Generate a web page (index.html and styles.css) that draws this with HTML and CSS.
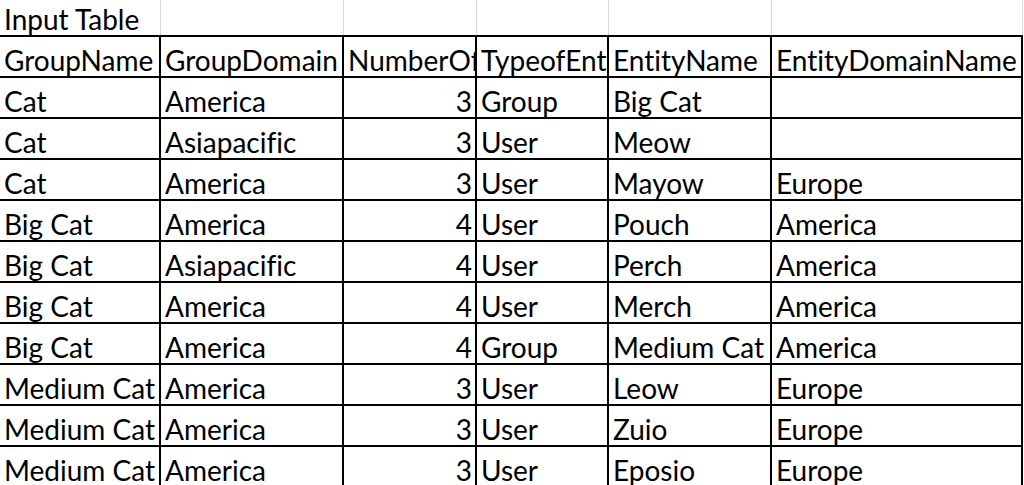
FILE: index.html
```html
<!DOCTYPE html>
<html>
<head>
<meta charset="utf-8">
<link rel="stylesheet" href="styles.css">
</head>
<body>
<table class="sheet">
  <colgroup>
    <col class="c1"><col class="c2"><col class="c3"><col class="c4"><col class="c5"><col class="c6">
  </colgroup>
  <tr class="title-row">
    <td>Input Table</td><td></td><td></td><td></td><td></td><td></td>
  </tr>
  <tr class="head-row">
    <td>GroupName</td><td>GroupDomain</td><td>NumberOf</td><td>TypeofEnt</td><td>EntityName</td><td>EntityDomainName</td>
  </tr>
  <tr><td>Cat</td><td>America</td><td class="num">3</td><td>Group</td><td>Big Cat</td><td></td></tr>
  <tr><td>Cat</td><td>Asiapacific</td><td class="num">3</td><td>User</td><td>Meow</td><td></td></tr>
  <tr><td>Cat</td><td>America</td><td class="num">3</td><td>User</td><td>Mayow</td><td>Europe</td></tr>
  <tr><td>Big Cat</td><td>America</td><td class="num">4</td><td>User</td><td>Pouch</td><td>America</td></tr>
  <tr><td>Big Cat</td><td>Asiapacific</td><td class="num">4</td><td>User</td><td>Perch</td><td>America</td></tr>
  <tr><td>Big Cat</td><td>America</td><td class="num">4</td><td>User</td><td>Merch</td><td>America</td></tr>
  <tr><td>Big Cat</td><td>America</td><td class="num">4</td><td>Group</td><td>Medium Cat</td><td>America</td></tr>
  <tr><td>Medium Cat</td><td>America</td><td class="num">3</td><td>User</td><td>Leow</td><td>Europe</td></tr>
  <tr><td>Medium Cat</td><td>America</td><td class="num">3</td><td>User</td><td>Zuio</td><td>Europe</td></tr>
  <tr><td>Medium Cat</td><td>America</td><td class="num">3</td><td>User</td><td>Eposio</td><td>Europe</td></tr>
</table>
</body>
</html>
```

FILE: styles.css
```css
html, body {
  margin: 0;
  padding: 0;
  background: #ffffff;
  overflow: hidden;
}

.sheet {
  border-collapse: collapse;
  table-layout: fixed;
  width: 1022px;
  font-family: Lato, "Liberation Sans", sans-serif;
  font-size: 28px;
  font-variant-ligatures: none;
  color: #000000;
}

.c1 { width: 160px; }
.c2 { width: 183px; }
.c3 { width: 133px; }
.c4 { width: 132px; }
.c5 { width: 163px; }
.c6 { width: 251px; }

.sheet td {
  height: 38px;
  padding: 0 3px 1px 4px;
  border: 2px solid #000000;
  border-left: none;
  white-space: nowrap;
  overflow: hidden;
  vertical-align: bottom;
  line-height: 30px;
}

.sheet .title-row td {
  height: 34px;
  border: none;
  border-right: 1px solid #d9d9d9;
}

.sheet .num {
  text-align: right;
}
```
